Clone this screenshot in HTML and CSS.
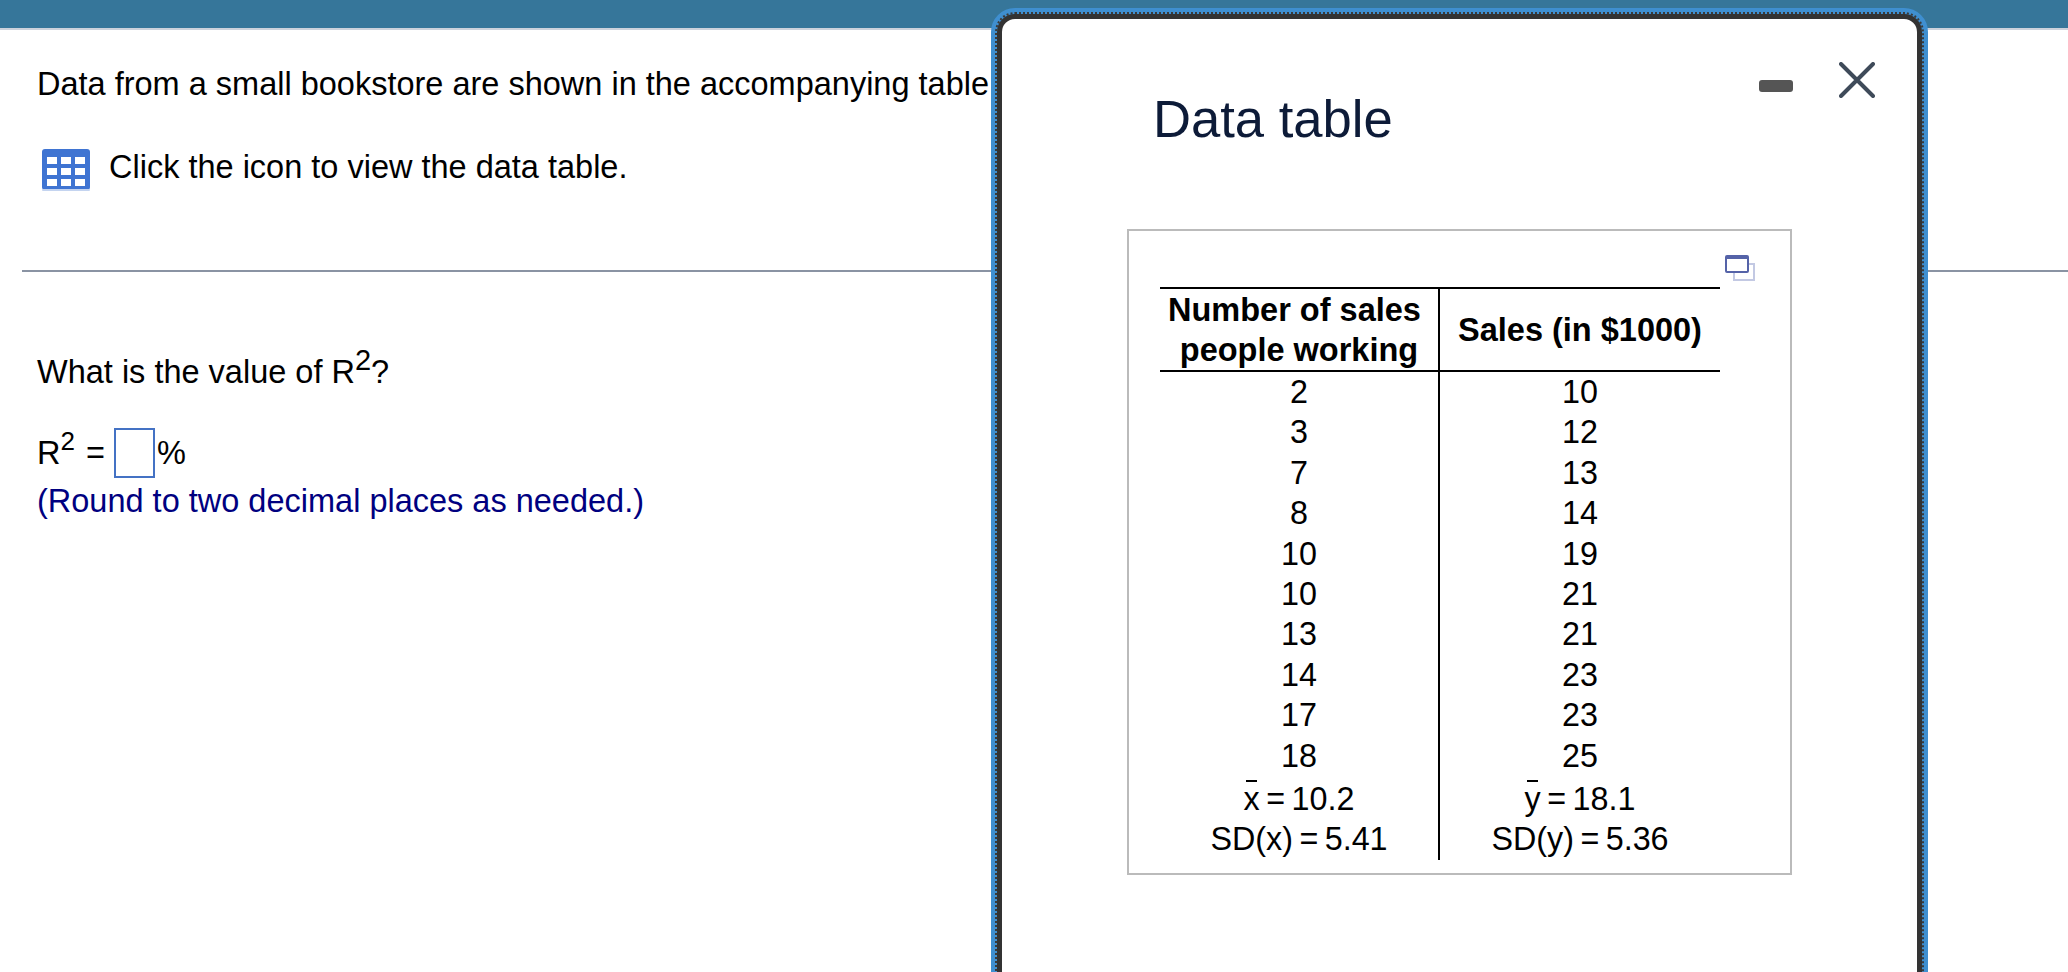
FILE: index.html
```html
<!DOCTYPE html>
<html lang="en">
<head>
    <meta charset="UTF-8">
    <title>Data table</title>
    <link rel="stylesheet" href="styles.css">
</head>
<body>
    <div class="topbar"></div>

    <div class="main">
        <div class="stem">
            <p class="intro">Data from a small bookstore are shown in the accompanying table</p>
            <div class="icon-row">
                <svg class="table-icon" width="48" height="42" viewBox="0 0 48 42">
                    <rect x="0" y="0" width="48" height="41" rx="3" fill="#3f74d2"/>
                    <rect x="0" y="40" width="48" height="2" rx="1" fill="#c4d4f0"/>
                    <g fill="#fff">
                        <rect x="5" y="8" width="10" height="7"/>
                        <rect x="19" y="8" width="10" height="7"/>
                        <rect x="33" y="8" width="10" height="7"/>
                        <rect x="5" y="19" width="10" height="7"/>
                        <rect x="19" y="19" width="10" height="7"/>
                        <rect x="33" y="19" width="10" height="7"/>
                        <rect x="5" y="30" width="10" height="7"/>
                        <rect x="19" y="30" width="10" height="7"/>
                        <rect x="33" y="30" width="10" height="7"/>
                    </g>
                </svg>
                <span>Click the icon to view the data table.</span>
            </div>
        </div>
        <div class="rule"></div>
        <div class="question">
            <p class="ask">What is the value of R<sup>2</sup>?</p>
            <p class="answer">R<sup>2</sup> = <span class="blank"></span>%</p>
            <p class="hint">(Round to two decimal places as needed.)</p>
        </div>
    </div>

    <div class="modal">
        <div class="modal-dots">
            <div class="modal-inner">
                <div class="modal-head">
                    <h1>Data table</h1>
                    <div class="minimize"></div>
                    <svg class="close" width="36" height="36" viewBox="0 0 36 36">
                        <path d="M2 2 L34 34 M34 2 L2 34" stroke="#3e4a59" stroke-width="4" stroke-linecap="round"/>
                    </svg>
                </div>

                <div class="table-box">
                    <svg class="popout" width="30" height="26" viewBox="0 0 30 26">
                        <rect x="9" y="9" width="20" height="16" fill="#fff" stroke="#c3c9e3" stroke-width="2"/>
                        <rect x="1" y="1" width="22" height="16" rx="1" fill="#fff" stroke="#5563a8" stroke-width="2"/>
                        <rect x="1" y="1" width="22" height="3" fill="#5563a8"/>
                    </svg>
                    <table class="data">
                        <thead>
                            <tr>
                                <th>Number of sales&nbsp;<br>people working</th>
                                <th>Sales (in $1000)</th>
                            </tr>
                        </thead>
                        <tbody>
                            <tr><td>2</td><td>10</td></tr>
                            <tr><td>3</td><td>12</td></tr>
                            <tr><td>7</td><td>13</td></tr>
                            <tr><td>8</td><td>14</td></tr>
                            <tr><td>10</td><td>19</td></tr>
                            <tr><td>10</td><td>21</td></tr>
                            <tr><td>13</td><td>21</td></tr>
                            <tr><td>14</td><td>23</td></tr>
                            <tr><td>17</td><td>23</td></tr>
                            <tr><td>18</td><td>25</td></tr>
                            <tr class="stat"><td><span class="bar">x</span> = 10.2</td><td><span class="bar">y</span> = 18.1</td></tr>
                            <tr><td>SD(x) = 5.41</td><td>SD(y) = 5.36</td></tr>
                        </tbody>
                    </table>
                </div>
            </div>
        </div>
    </div>
</body>
</html>
```

FILE: styles.css
```css
html, body {
    margin: 0;
    padding: 0;
    height: 972px;
    overflow: hidden;
    background-color: #fff;
}
body {
    font-family: "Liberation Sans", Arial, sans-serif;
    font-size: 32.5px;
    color: #000;
    position: relative;
}
p {
    margin: 0;
}
sup {
    font-size: 29px;
    line-height: 0;
    vertical-align: 13px;
}
.topbar {
    height: 28px;
    background-color: #36769a;
    border-bottom: 2px solid #ccd2dc;
}
.main {
    padding-left: 22px;
}
.stem {
    padding: 34px 0 0 15px;
    box-sizing: border-box;
    height: 240px;
}
.intro {
    line-height: 40px;
}
.icon-row {
    display: flex;
    align-items: flex-start;
    margin-top: 43px;
    padding-left: 5px;
    gap: 19px;
    line-height: 40px;
}
.table-icon {
    flex-shrink: 0;
    margin-top: 2px;
    filter: blur(0.7px);
}
.rule {
    height: 2px;
    background-color: #8a93a3;
}
.question {
    padding: 80px 0 0 15px;
}
.ask {
    line-height: 40px;
}
.answer {
    margin-top: 36px;
    height: 50px;
    line-height: 50px;
    white-space: pre;
}
.answer sup {
    font-size: 26px;
    vertical-align: 14px;
    margin-right: 2px;
}
.blank {
    display: inline-block;
    width: 41px;
    height: 50px;
    border: 2px solid #4472c4;
    box-sizing: border-box;
    vertical-align: top;
    margin-right: 2px;
}
.hint {
    color: #000080;
    line-height: 40px;
    margin-top: 3px;
}

/* window on top of the question */
.modal {
    position: absolute;
    left: 991px;
    top: 8px;
    width: 937px;
    height: 1100px;
    box-sizing: border-box;
    border: 4px solid #3f8fd0;
    border-radius: 24px;
    background-color: #3f8fd0;
}
.modal-dots {
    height: 100%;
    box-sizing: border-box;
    border: 2px dotted #3a3a3a;
    border-radius: 20px;
}
.modal-inner {
    height: 100%;
    box-sizing: border-box;
    border: 5px solid #333;
    border-radius: 18px;
    background-color: #fff;
}
.modal-head {
    display: flex;
    align-items: flex-start;
    height: 210px;
    padding-left: 151px;
    box-sizing: border-box;
}
.modal-head h1 {
    margin: 70px 0 0 0;
    flex: 1;
    font-size: 52.6px;
    line-height: 60px;
    font-weight: normal;
    color: #0d1b38;
}
.minimize {
    width: 34px;
    height: 12px;
    margin: 61px 46px 0 0;
    border-radius: 3px;
    background-color: #555;
}
.close {
    margin: 43px 42px 0 0;
}
.table-box {
    position: relative;
    margin-left: 125px;
    width: 665px;
    height: 646px;
    box-sizing: border-box;
    border: 2px solid #bbb;
    padding: 56px 0 0 31px;
}
.popout {
    position: absolute;
    right: 35px;
    top: 24px;
    filter: blur(0.5px);
}
.data {
    border-collapse: collapse;
    table-layout: fixed;
    width: 560px;
    border-top: 2px solid #000;
    text-align: center;
}
.data th {
    font-size: 32.5px;
    line-height: 40px;
    height: 81px;
    padding: 1px 0 0 0;
    box-sizing: border-box;
    border-bottom: 2px solid #000;
}
.data td {
    font-size: 32.3px;
    word-spacing: -2.5px;
    line-height: 38px;
    height: 40.4px;
    padding: 0;
    vertical-align: top;
}
.data tbody tr:first-child td {
    padding-top: 1px;
}
.data th:first-child, .data td:first-child {
    width: 279px;
    border-right: 2px solid #000;
}
.data .stat td {
    height: 43px;
    padding-top: 3px;
    box-sizing: border-box;
}
.bar {
    position: relative;
}
.bar::before {
    content: "";
    position: absolute;
    left: 2px;
    top: -1px;
    width: 11px;
    height: 2px;
    background-color: #000;
}
```
